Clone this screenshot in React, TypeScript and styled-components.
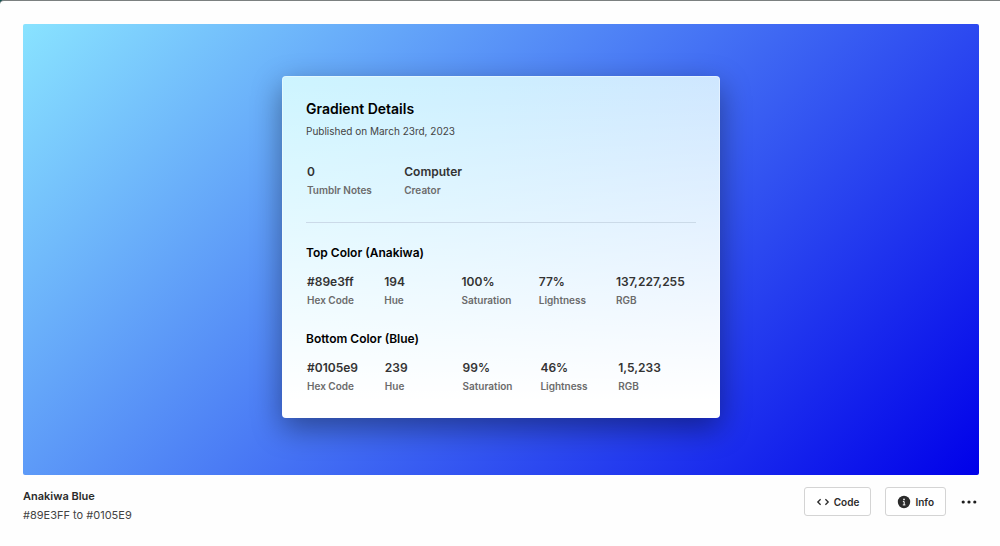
import React from "react";
import styled, { createGlobalStyle } from "styled-components";

const GlobalStyle = createGlobalStyle`
  *, *::before, *::after { box-sizing: border-box; }
  html { background: #14514f; }
  body {
    margin: 0;
    font-family: Inter, "Liberation Sans", sans-serif;
    color: #2b2b2b;
  }
  h1, h2, h3, p, dl, dt, dd { margin: 0; }
`;

const Page = styled.main`
  min-height: 100vh;
  padding: 23px 21px 20px 23px;
  border-top: 1px solid #7b8080;
  border-top-left-radius: 4px;
  background: #fefefe;
`;

const Hero = styled.section`
  display: flex;
  justify-content: center;
  padding: 52px 24px 57px;
  border-radius: 2px;
  background: linear-gradient(135deg, #89e3ff, #0000e9);
`;

const Card = styled.article`
  width: 100%;
  max-width: 438px;
  padding: 24px 23px 23px;
  border: 1px solid rgba(255, 255, 255, 0.4);
  border-radius: 4px;
  background:
    linear-gradient(180deg, rgba(255, 255, 255, 0) 0%, #fff 95%),
    linear-gradient(100deg, #cdf5ff 0%, #cdeeff 45%, #cfe5ff 100%);
  background-clip: border-box;
  background-origin: border-box;
  box-shadow: 0 10px 30px rgba(0, 0, 0, 0.4);
`;

const CardTitle = styled.h1`
  font-size: 14px;
  line-height: 16px;
  font-weight: 600;
  color: #000;
`;

const Published = styled.p`
  margin-top: 6px;
  font-size: 10px;
  line-height: 16px;
  color: #444;
`;

const Divider = styled.hr`
  height: 1px;
  margin: 24px 0 23px;
  border: 0;
  background: #cbdae8;
`;

const GroupTitle = styled.h2`
  font-size: 12px;
  line-height: 14px;
  font-weight: 600;
  color: #000;
`;

const StatList = styled.dl<{ $columns: string; $top: number }>`
  display: grid;
  grid-template-columns: ${(p) => p.$columns};
  margin-top: ${(p) => p.$top}px;
  padding-left: 1px;
`;

const Stat = styled.div`
  display: flex;
  flex-direction: column-reverse;
  gap: 2px;
  white-space: nowrap;
`;

const StatLabel = styled.dt`
  font-size: 10px;
  line-height: 16px;
  font-weight: 600;
  color: #6b6b6b;
`;

const StatValue = styled.dd`
  font-size: 12px;
  line-height: 16px;
  font-weight: 600;
  color: #333;
`;

const ColorGroup = styled.section`
  & + & { margin-top: 24px; }
`;

const Footer = styled.footer`
  display: flex;
  justify-content: space-between;
  align-items: flex-start;
  padding-top: 12px;
`;

const Name = styled.h2`
  font-size: 11px;
  line-height: 18px;
  font-weight: 600;
`;

const Codes = styled.p`
  margin-top: 1px;
  font-size: 11px;
  line-height: 18px;
  font-weight: 400;
  color: #444;
`;

const Actions = styled.div`
  display: flex;
  align-items: center;
  gap: 14px;
`;

const Button = styled.button`
  display: flex;
  align-items: center;
  gap: 4px;
  height: 29px;
  padding: 0 11px;
  border: 1px solid #d4d4d4;
  border-radius: 3px;
  background: #fff;
  font: 600 10px/16px Inter, "Liberation Sans", sans-serif;
  color: #2b2b2b;
  cursor: pointer;
`;

const MoreButton = styled.button`
  display: flex;
  padding: 0 2px 0 1px;
  border: 0;
  background: none;
  cursor: pointer;
`;

type Item = { label: string; value: string };

const summary: Item[] = [
  { label: "Tumblr Notes", value: "0" },
  { label: "Creator", value: "Computer" },
];

const groups: { title: string; columns: string; items: Item[] }[] = [
  {
    title: "Top Color (Anakiwa)",
    columns: "repeat(4, 1fr) 80px",
    items: [
      { label: "Hex Code", value: "#89e3ff" },
      { label: "Hue", value: "194" },
      { label: "Saturation", value: "100%" },
      { label: "Lightness", value: "77%" },
      { label: "RGB", value: "137,227,255" },
    ],
  },
  {
    title: "Bottom Color (Blue)",
    columns: "repeat(5, 1fr)",
    items: [
      { label: "Hex Code", value: "#0105e9" },
      { label: "Hue", value: "239" },
      { label: "Saturation", value: "99%" },
      { label: "Lightness", value: "46%" },
      { label: "RGB", value: "1,5,233" },
    ],
  },
];

function Stats({ items, columns, top }: { items: Item[]; columns: string; top: number }) {
  return (
    <StatList $columns={columns} $top={top}>
      {items.map((item) => (
        <Stat key={item.label}>
          <StatLabel>{item.label}</StatLabel>
          <StatValue>{item.value}</StatValue>
        </Stat>
      ))}
    </StatList>
  );
}

function CodeIcon() {
  return (
    <svg width="14" height="14" viewBox="0 0 14 14" fill="none" stroke="#2b2b2b" strokeWidth="1.3" aria-hidden="true">
      <path d="M4.6 4.2 1.8 7l2.8 2.8M9.4 4.2 12.2 7 9.4 9.8" />
    </svg>
  );
}

function InfoIcon() {
  return (
    <svg width="14" height="14" viewBox="0 0 14 14" aria-hidden="true">
      <circle cx="7" cy="7" r="6.2" fill="#2b2b2b" />
      <circle cx="7" cy="4.4" r="0.85" fill="#fff" />
      <path d="M5.9 6.6h1.3v3.3M5.8 9.9h2.6" fill="none" stroke="#fff" strokeWidth="1" />
    </svg>
  );
}

function MoreIcon() {
  return (
    <svg width="16" height="6" viewBox="0 0 16 6" fill="#1d1d1d" aria-hidden="true">
      <circle cx="2.2" cy="3" r="1.6" />
      <circle cx="8" cy="3" r="1.6" />
      <circle cx="13.8" cy="3" r="1.6" />
    </svg>
  );
}

export default function App() {
  return (
    <>
      <GlobalStyle />
      <Page>
        <Hero>
          <Card>
            <CardTitle>Gradient Details</CardTitle>
            <Published>Published on March 23rd, 2023</Published>
            <Stats items={summary} columns="repeat(4, 1fr)" top={25} />
            <Divider />
            {groups.map((group) => (
              <ColorGroup key={group.title}>
                <GroupTitle>{group.title}</GroupTitle>
                <Stats items={group.items} columns={group.columns} top={14} />
              </ColorGroup>
            ))}
          </Card>
        </Hero>
        <Footer>
          <div>
            <Name>Anakiwa Blue</Name>
            <Codes>#89E3FF to #0105E9</Codes>
          </div>
          <Actions>
            <Button type="button">
              <CodeIcon />
              Code
            </Button>
            <Button type="button">
              <InfoIcon />
              Info
            </Button>
            <MoreButton type="button" aria-label="More options">
              <MoreIcon />
            </MoreButton>
          </Actions>
        </Footer>
      </Page>
    </>
  );
}
